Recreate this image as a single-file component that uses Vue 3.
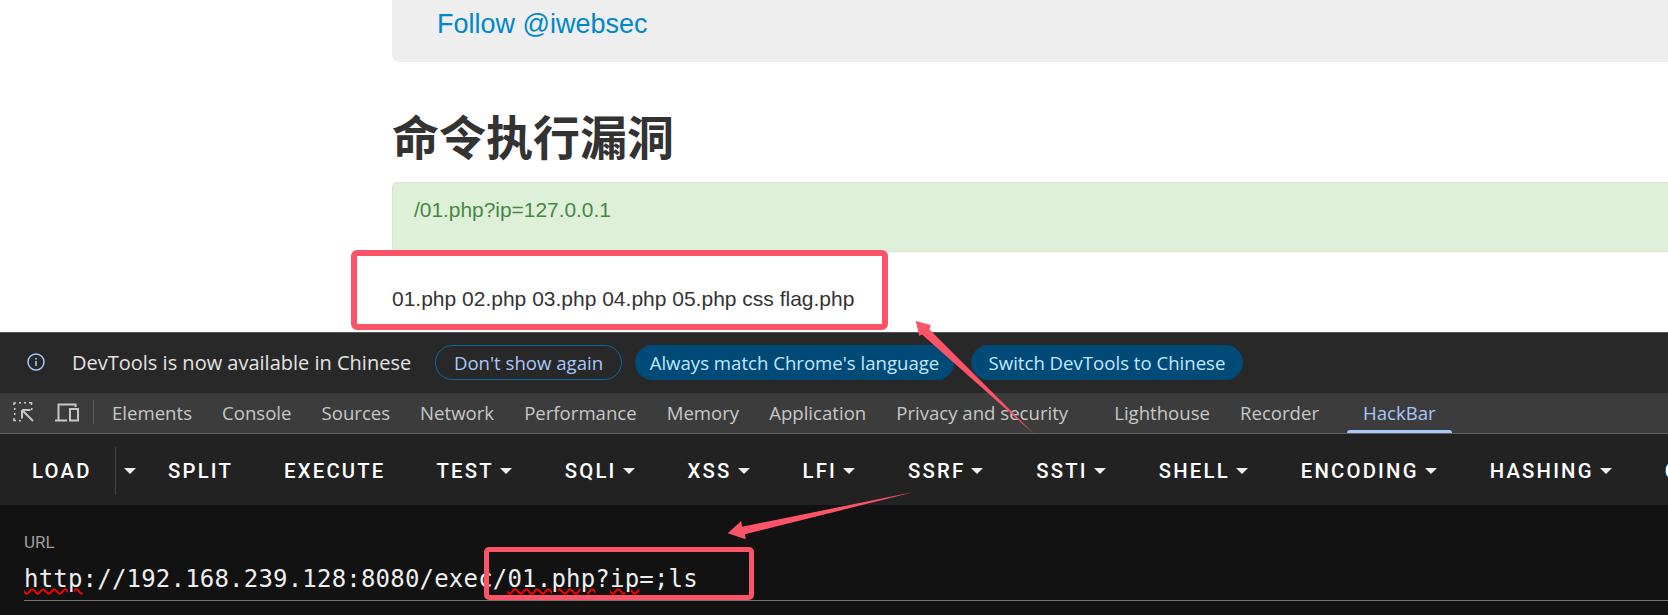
<script setup>
const tabs = [
  { name: 'Elements' }, { name: 'Console' }, { name: 'Sources' }, { name: 'Network' },
  { name: 'Performance' }, { name: 'Memory' }, { name: 'Application' },
  { name: 'Privacy and security', cls: 'privacy' }, { name: 'Lighthouse' }, { name: 'Recorder', cls: 'recorder' },
  { name: 'HackBar', cls: 'active' }
]
const tools = [
  { name: 'SPLIT' }, { name: 'EXECUTE' }, { name: 'TEST', caret: true }, { name: 'SQLI', caret: true },
  { name: 'XSS', caret: true }, { name: 'LFI', caret: true }, { name: 'SSRF', caret: true },
  { name: 'SSTI', caret: true }, { name: 'SHELL', caret: true }, { name: 'ENCODING', caret: true },
  { name: 'HASHING', caret: true }, { name: 'C' }
]
</script>

<template>
  <div class="screen">
    <section class="page">
      <div class="well"><a class="follow">Follow @iwebsec</a></div>
      <h1 class="title">命令执行漏洞</h1>
      <div class="alert">/01.php?ip=127.0.0.1</div>
      <p class="output">01.php 02.php 03.php 04.php 05.php css flag.php</p>
    </section>

    <section class="devtools">
      <div class="infobar">
        <svg class="info" width="20" height="20" viewBox="0 0 20 20" fill="none">
          <circle cx="10" cy="10" r="8" stroke="#a8c7fa" stroke-width="1.5" />
          <path d="M10 9v5M10 6v1.6" stroke="#a8c7fa" stroke-width="1.6" />
        </svg>
        <span class="info-text">DevTools is now available in Chinese</span>
        <button class="pill outline">Don't show again</button>
        <button class="pill filled">Always match Chrome's language</button>
        <button class="pill filled">Switch DevTools to Chinese</button>
      </div>

      <div class="tabbar">
        <svg class="tool-icon" width="24" height="24" viewBox="0 0 24 24" fill="none">
          <path d="M2 5V3h2M7 2.700h2M12 2.700h2M17 2.700h2.500V5M2.700 8v2M2.700 13v2M2 18v2.500h2M7 20.700h2M19.700 8v2" stroke="#c7c7c7" stroke-width="1.6" />
          <path d="M10 10h8.500M10 10v8.500M10.500 10.500L21 21" stroke="#c7c7c7" stroke-width="2" />
        </svg>
        <svg class="tool-icon device" width="26" height="24" viewBox="0 0 26 24" fill="none">
          <path d="M4.500 20V4.500h17V7M1 20.500h12" stroke="#c7c7c7" stroke-width="2" />
          <rect x="16" y="9" width="8" height="11.500" stroke="#c7c7c7" stroke-width="2" />
        </svg>
        <span class="divider"></span>
        <span v-for="t in tabs" :key="t.name" class="tab" :class="t.cls">{{ t.name }}</span>
      </div>

      <div class="toolbar">
        <span class="tool load">LOAD</span>
        <span class="split-caret"><i class="caret"></i></span>
        <span v-for="t in tools" :key="t.name" class="tool" :class="{ menu: t.caret }">{{ t.name }}<i v-if="t.caret" class="caret"></i></span>
      </div>

      <div class="urlpane">
        <label class="url-label">URL</label>
        <div class="url-field"><span class="sp">http</span>://192.168.239.128:8080/exec/<span class="sp">01.php</span>?<span class="sp">ip</span>=;ls</div>
      </div>
    </section>

    <div class="mark mark-output"></div>
    <div class="mark mark-url"></div>
    <svg class="arrows" width="1668" height="615" viewBox="0 0 1668 615">
      <path d="M915.700 321L930.700 325L929.500 329.500L1034 434L922 334.500L919.300 336Z" fill="#fb5468" />
      <path d="M727.700 533.300L741.300 521L742 526.700L915 491.800L745 534.300L745.700 539.300Z" fill="#fb5468" />
    </svg>
  </div>
</template>

<style scoped>
.screen {
  position: relative;
  width: 1668px;
  height: 615px;
  overflow: hidden;
  display: flex;
  flex-direction: column;
  background: #fff;
}
.page {
  height: 332px;
  flex: none;
  padding-left: 392px;
  font-family: "Liberation Sans", Arial, sans-serif;
  box-sizing: border-box;
}
.well {
  height: 62px;
  box-sizing: border-box;
  background: #eee;
  border-bottom-left-radius: 8px;
  padding: 8px 0 0 45px;
  line-height: 32px;
}
.follow {
  font-size: 27px;
  color: #0088cc;
}
.title {
  margin: 46px 0 0;
  font-family: "Liberation Sans", "Noto Sans CJK SC", sans-serif;
  font-size: 47px;
  line-height: 62px;
  font-weight: 700;
  color: #333;
}
.alert {
  margin-top: 12px;
  height: 70px;
  box-sizing: border-box;
  background: #dff0d8;
  border: 1px solid #d6e9c6;
  border-right: 0;
  border-radius: 5px 0 0 5px;
  padding: 15px 0 0 21px;
  font-size: 20.900px;
  line-height: 24px;
  color: #468847;
}
.output {
  margin: 35px 0 0;
  font-size: 21px;
  line-height: 24px;
  color: #333;
}
.devtools {
  flex: 1;
  display: flex;
  flex-direction: column;
  min-height: 0;
  background: #282828;
  border-top: 1px solid #555;
}
.infobar {
  height: 60px;
  flex: none;
  box-sizing: border-box;
  padding-bottom: 2px;
  display: flex;
  align-items: center;
  background: #282828;
  font-family: "Open Sans", "Noto Sans", sans-serif;
  font-size: 20px;
}
.info { margin-left: 26px; }
.info-text {
  margin-left: 26px;
  width: 363px;
  color: #e3e3e3;
  white-space: nowrap;
}
.pill {
  height: 35px;
  border-radius: 18px;
  font: inherit;
  font-size: 18.600px;
  padding: 0;
  white-space: nowrap;
}
.outline {
  width: 187px;
  background: transparent;
  border: 1px solid #0a6aa0;
  color: #a8c7fa;
}
.filled {
  margin-left: 13px;
  background: #004a77;
  border: 0;
  color: #c2e7ff;
  width: 319px;
}
.filled:last-child { margin-left: 17px; width: 272px; }
.tabbar {
  height: 41px;
  flex: none;
  box-sizing: border-box;
  padding-bottom: 2px;
  display: flex;
  align-items: center;
  background: #3c3c3c;
  border-bottom: 1px solid #5e5e5e;
  font-family: "Open Sans", "Noto Sans", sans-serif;
  font-size: 18.600px;
  color: #c7c7c7;
}
.tool-icon { margin-left: 12px; flex: none; }
.device { margin-left: 18px; }
.divider {
  width: 1px;
  height: 24px;
  margin: 0 18px 0 13px;
  background: #5e5e5e;
}
.tab {
  margin-right: 30px;
  white-space: nowrap;
}
.tab.privacy { margin-right: 46px; }
.tab.recorder { margin-right: 44px; }
.tab.active {
  position: relative;
  color: #a8c7fa;
}
.tab.active::after {
  content: "";
  position: absolute;
  left: -16px;
  right: -16px;
  bottom: -8px;
  height: 3px;
  border-radius: 3px 3px 0 0;
  background: #a8c7fa;
}
.toolbar {
  height: 71px;
  flex: none;
  box-sizing: border-box;
  padding: 2px 0 0 32px;
  display: flex;
  align-items: center;
  background: #222;
  font-family: Roboto, sans-serif;
  font-size: 20.300px;
  font-weight: 500;
  letter-spacing: 2.200px;
  color: #fff;
  white-space: nowrap;
}
.tool {
  display: flex;
  align-items: center;
  margin-right: 51px;
}
.tool.menu { margin-right: 53px; }
.tool.load { margin-right: 23px; }
.split-caret {
  display: flex;
  align-items: center;
  height: 48px;
  border-left: 1px solid #444;
  padding-left: 8px;
  margin-right: 32.500px;
}
.caret {
  width: 0;
  height: 0;
  margin-left: 6px;
  border-left: 6px solid transparent;
  border-right: 6px solid transparent;
  border-top: 6px solid #eee;
}
.split-caret .caret { margin-left: 0; }
.urlpane {
  flex: 1;
  background: #121212;
  padding: 27px 0 0 24px;
  min-height: 0;
}
.url-label {
  display: block;
  font-family: Roboto, sans-serif;
  font-size: 17px;
  line-height: 20px;
  color: #9e9e9e;
}
.url-field {
  margin-top: 11px;
  height: 38px;
  box-sizing: border-box;
  border-bottom: 1px solid #777;
  font-family: "DejaVu Sans Mono", monospace;
  font-size: 24px;
  letter-spacing: 0.200px;
  line-height: 32px;
  color: #eee;
  white-space: nowrap;
}
.sp {
  text-decoration: underline wavy #f00 1.500px;
  text-underline-offset: 1px;
}
.mark {
  position: absolute;
  box-sizing: border-box;
  border: 5px solid #fb5468;
  border-radius: 5px;
}
.mark-output { left: 351px; top: 250px; width: 537px; height: 80px; border-width: 6px; border-radius: 6px; }
.mark-url { left: 484px; top: 547px; width: 270px; height: 53px; }
.arrows {
  position: absolute;
  left: 0;
  top: 0;
  pointer-events: none;
}
</style>

<style>
html, body { margin: 0; overflow: hidden; }
</style>
